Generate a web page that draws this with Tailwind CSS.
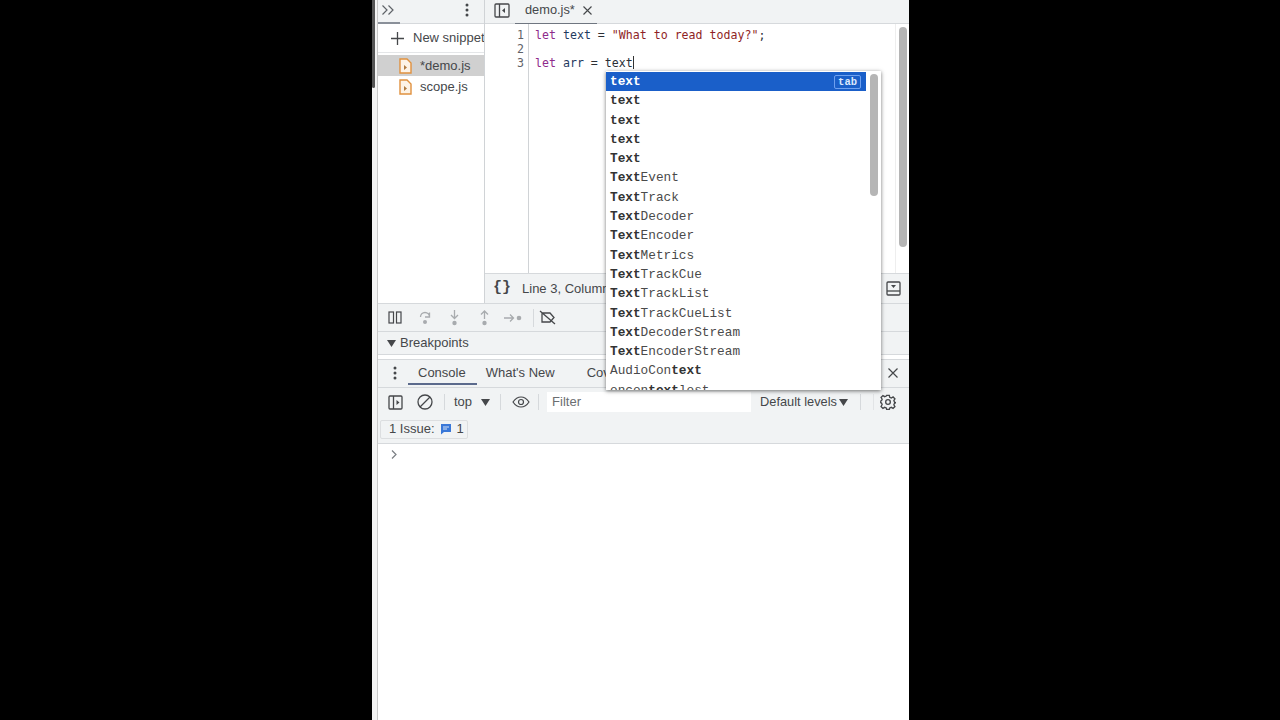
<!DOCTYPE html>
<html lang="en">
<head>
    <meta charset="UTF-8">
    <title>DevTools Sources</title>
    <script src="https://cdn.jsdelivr.net/npm/@tailwindcss/browser@4"></script>
</head>
<body class="bg-black overflow-hidden">
<div class="w-[1280px] h-[720px] flex justify-start font-['Liberation_Sans',sans-serif] text-[13px] text-[#45474a]">
    <div class="ml-[372px] w-[537px] h-full flex bg-white relative">
        <!-- page scrollbar strip -->
        <div class="w-[6px] h-full bg-[#f3f3f3] border-r border-[#c9c9c9]">
            <div class="w-[3px] h-[88px] bg-[#555] rounded-b-sm"></div>
        </div>

        <div class="flex-1 flex flex-col min-w-0">
            <!-- sources -->
            <div class="h-[304px] flex border-b border-[#d6d9dc]">
                <!-- navigator -->
                <div class="w-[107px] flex flex-col border-r border-[#d0d3d6] shrink-0">
                    <div class="h-[24px] bg-[#f1f3f4] border-b border-[#d6d9dc] flex items-center justify-between pl-[3px] pr-[15px] pb-[3px] relative">
                        <svg class="w-[14px] h-[12px]" viewBox="0 0 14 12" fill="none" stroke="#5f6368" stroke-width="1.2"><path d="M1.5 1.5 6 6 1.5 10.5M7.5 1.5 12 6 7.5 10.5"/></svg>
                        <svg class="w-[4px] h-[14px]" viewBox="0 0 4 14" fill="#45474a"><circle cx="2" cy="2" r="1.5"/><circle cx="2" cy="7" r="1.5"/><circle cx="2" cy="12" r="1.5"/></svg>
                        <div class="absolute left-0 bottom-[-1px] w-[22px] h-[2px] bg-[#8a9099]"></div>
                    </div>
                    <div class="h-[29px] flex items-center pl-[13px] gap-[9px] border-b border-[#e4e6e8] overflow-hidden whitespace-nowrap pr-[2px]">
                        <svg class="w-[13px] h-[13px] shrink-0" viewBox="0 0 13 13" fill="none" stroke="#45474a" stroke-width="1.3"><path d="M6.5 0v13M0 6.5h13"/></svg>
                        <span>New snippet</span>
                    </div>
                    <div class="h-[21px] mt-[2px] pt-[1px] bg-[#d0d0d0] flex items-center pl-[21px] gap-[8px]">
                        <svg class="w-[13px] h-[16px] shrink-0" viewBox="0 0 13 16" fill="#fdf3e6" stroke="#e0913f" stroke-width="1.4"><path d="M1 1h7l4 4v10H1z"/><path d="M5 7l3 2.5L5 12z" fill="#b07a3f" stroke="none"/></svg>
                        <span>*demo.js</span>
                    </div>
                    <div class="h-[22px] flex items-center pl-[21px] gap-[8px]">
                        <svg class="w-[13px] h-[16px] shrink-0" viewBox="0 0 13 16" fill="#fdf3e6" stroke="#e0913f" stroke-width="1.4"><path d="M1 1h7l4 4v10H1z"/><path d="M5 7l3 2.5L5 12z" fill="#b07a3f" stroke="none"/></svg>
                        <span>scope.js</span>
                    </div>
                </div>

                <!-- editor -->
                <div class="flex-1 flex flex-col min-w-0">
                    <div class="h-[24px] bg-[#f1f3f4] border-b border-[#d6d9dc] flex items-center pl-[9px]">
                        <svg class="w-[16px] h-[15px] shrink-0 mb-[3px]" viewBox="0 0 16 15" fill="none" stroke="#45474a" stroke-width="1.3"><rect x="1" y="1" width="14" height="13" rx="1"/><path d="M5.5 1v13"/><path d="M11 5v5L8 7.5z" fill="#45474a" stroke="none"/></svg>
                        <div class="relative h-[24px] ml-[5px] pl-[10px] pb-[3px] w-[82px] flex items-center gap-[8px]">
                            <span class="text-[12.8px]">demo.js*</span>
                            <svg class="w-[9px] h-[9px]" viewBox="0 0 9 9" stroke="#45474a" stroke-width="1.1"><path d="M.5.5l8 8M8.5.5l-8 8"/></svg>
                            <div class="absolute left-0 bottom-0 w-[82px] h-[1px] bg-[#6f7680]"></div>
                        </div>
                    </div>
                    <div class="flex-1 flex min-h-0">
                        <div class="w-[44px] border-r border-[#d0d3d6] pt-[4px] pr-[4px] text-right font-['DejaVu_Sans_Mono',monospace] text-[11.6px] leading-[14px] text-[#5f6368]">
                            <div>1</div><div>2</div><div>3</div>
                        </div>
                        <div class="flex-1 pt-[4px] pl-[6px] font-['DejaVu_Sans_Mono',monospace] text-[11.6px] leading-[14px] text-[#2b2f36]">
                            <div class="whitespace-pre"><span class="text-[#8f2a8c]">let</span> <span class="text-[#1f3a5f]">text</span> = <span class="text-[#8f1f26]">"What to read today?"</span>;</div>
                            <div class="whitespace-pre">&nbsp;</div>
                            <div class="whitespace-pre"><span class="text-[#8f2a8c]">let</span> <span class="text-[#1f3a5f]">arr</span> = text<span class="inline-block w-[1px] h-[13px] bg-[#333] align-[-2px]"></span></div>
                        </div>
                        <div class="w-[14px] border-l border-[#eeeeee] pl-[3px] pt-[3px]">
                            <div class="w-[8px] h-[220px] rounded-full bg-[#b5b5b5]"></div>
                        </div>
                    </div>
                    <div class="h-[30px] bg-[#f1f3f4] border-t border-[#d6d9dc] flex items-center pl-[8px] pr-[8px] justify-between">
                        <div class="flex items-center gap-[11px]">
                            <span class="font-['Liberation_Mono',monospace] text-[15px] font-bold">{}</span>
                            <span>Line 3, Column 15</span>
                        </div>
                        <svg class="w-[15px] h-[15px]" viewBox="0 0 15 15" fill="none" stroke="#45474a" stroke-width="1.3"><rect x="1" y="1" width="13" height="13" rx="1"/><path d="M1 10h13"/><path d="M5 4h5L7.5 7z" fill="#45474a" stroke="none"/></svg>
                    </div>
                </div>
            </div>

            <!-- debugger toolbar -->
            <div class="h-[28px] bg-[#f1f3f4] border-b border-[#d6d9dc] flex items-center pl-[10px] gap-[16.5px]">
                <svg class="w-[14px] h-[13px]" viewBox="0 0 14 13" fill="none" stroke="#45474a" stroke-width="1.2"><rect x="1" y="1" width="4.5" height="11"/><rect x="8.5" y="1" width="4.5" height="11"/></svg>
                <svg class="w-[13px] h-[14px]" viewBox="0 0 13 14" fill="none" stroke="#a8abae" stroke-width="1.3"><path d="M1.5 6a4.5 4.5 0 0 1 9 0M10.5 1.5V6H6"/><circle cx="6" cy="11" r="2" fill="#a8abae" stroke="none"/></svg>
                <svg class="w-[13px] h-[16px]" viewBox="0 0 13 16" fill="none" stroke="#a8abae" stroke-width="1.3"><path d="M6.5 0v8M3 5l3.5 3.5L10 5"/><circle cx="6.5" cy="13" r="2.2" fill="#a8abae" stroke="none"/></svg>
                <svg class="w-[13px] h-[16px]" viewBox="0 0 13 16" fill="none" stroke="#a8abae" stroke-width="1.3"><path d="M6.5 9V1M3 4.5 6.5 1 10 4.5"/><circle cx="6.5" cy="13" r="2.2" fill="#a8abae" stroke="none"/></svg>
                <svg class="w-[18px] h-[10px] -ml-[3px]" viewBox="0 0 18 10" fill="none" stroke="#a8abae" stroke-width="1.3"><path d="M0 5h9M6 1.5 9.5 5 6 8.5"/><circle cx="15" cy="5" r="2.3" fill="#a8abae" stroke="none"/></svg>
                <div class="w-[1px] h-[18px] bg-[#d6d9dc] -ml-[6px] -mr-[11px]"></div>
                <svg class="w-[17px] h-[15px]" viewBox="0 0 17 15" fill="none" stroke="#45474a" stroke-width="1.3"><path d="M3 3h8l4 4.5-4 4.5H3zM1 1l15 13"/></svg>
            </div>
            <!-- breakpoints -->
            <div class="h-[23px] bg-[#f1f3f4] border-b border-[#d6d9dc] flex items-center pl-[9px] gap-[4px]">
                <svg class="w-[9px] h-[7px]" viewBox="0 0 9 7" fill="#45474a"><path d="M0 0h9L4.5 7z"/></svg>
                <span>Breakpoints</span>
            </div>
            <div class="h-[5px] bg-white border-b border-[#d6d9dc]"></div>

            <!-- drawer tabs -->
            <div class="h-[28px] bg-[#f1f3f4] border-b border-[#d6d9dc] flex items-center relative pb-[1px]">
                <svg class="ml-[15px] w-[4px] h-[14px]" viewBox="0 0 4 14" fill="#45474a"><circle cx="2" cy="2" r="1.5"/><circle cx="2" cy="7" r="1.5"/><circle cx="2" cy="12" r="1.5"/></svg>
                <div class="relative ml-[21px]">Console<div class="absolute -left-[10px] -right-[11px] top-[20px] h-[2px] bg-[#5b6a8c]"></div></div>
                <div class="ml-[20px]">What's New</div>
                <div class="ml-[32px]">Coverage</div>
                <svg class="absolute right-[11px] top-[8px] w-[10px] h-[10px]" viewBox="0 0 10 10" stroke="#45474a" stroke-width="1.2"><path d="M.5.5l9 9M9.5.5l-9 9"/></svg>
            </div>

            <!-- console toolbar -->
            <div class="h-[28px] bg-[#f1f3f4] flex items-center pl-[10px]">
                <svg class="w-[15px] h-[15px] shrink-0" viewBox="0 0 15 15" fill="none" stroke="#45474a" stroke-width="1.3"><rect x="1" y="1" width="13" height="13" rx="1"/><path d="M5.5 1v13"/><path d="M8.5 5v5l3-2.5z" fill="#45474a" stroke="none"/></svg>
                <svg class="ml-[14px] w-[16px] h-[16px] shrink-0" viewBox="0 0 16 16" fill="none" stroke="#45474a" stroke-width="1.3"><circle cx="8" cy="8" r="7"/><path d="M3 13 13 3"/></svg>
                <div class="w-[1px] h-[16px] bg-[#d6d9dc] ml-[11px]"></div>
                <span class="ml-[9px]">top</span>
                <svg class="ml-[9px] w-[9px] h-[7px] shrink-0" viewBox="0 0 9 7" fill="#45474a"><path d="M0 0h9L4.5 7z"/></svg>
                <div class="w-[1px] h-[16px] bg-[#d6d9dc] ml-[10px]"></div>
                <svg class="ml-[11px] w-[18px] h-[12px] shrink-0" viewBox="0 0 18 12" fill="none" stroke="#45474a" stroke-width="1.2"><path d="M1 6c2-3 5-5 8-5s6 2 8 5c-2 3-5 5-8 5S3 9 1 6z"/><circle cx="9" cy="6" r="2.5"/></svg>
                <div class="w-[1px] h-[16px] bg-[#d6d9dc] ml-[8px]"></div>
                <div class="ml-[8px] w-[204px] h-[20px] bg-white flex items-center pl-[5px] text-[#6b6e72]">Filter</div>
                <span class="ml-[9px] text-[12.8px]">Default levels</span>
                <svg class="ml-[2px] w-[9px] h-[7px] shrink-0" viewBox="0 0 9 7" fill="#45474a"><path d="M0 0h9L4.5 7z"/></svg>
                <div class="w-[1px] h-[16px] bg-[#d6d9dc] ml-[12px]"></div>
                <div class="w-[1px] h-[16px] bg-[#e2e4e6] ml-[12px]"></div>
                <svg class="ml-[6px] w-[16px] h-[16px] shrink-0" viewBox="0 0 24 24" fill="none" stroke="#45474a" stroke-width="2"><path d="M10 2h4l.6 3 2.4 1 2.6-1.6 2.8 2.8L20.8 9.8l1 2.4 2.2.8v0l-2.2.8-1 2.4 1.6 2.6-2.8 2.8-2.6-1.6-2.4 1-.6 2.2h-4l-.6-2.2-2.4-1-2.6 1.6-2.8-2.8L3.2 15.8l-1-2.4L0 13v-2l2.2-.8 1-2.4-1.6-2.6 2.8-2.8L7 4l2.4-1z"/><circle cx="12" cy="12" r="3.5"/></svg>
            </div>

            <!-- issues -->
            <div class="h-[28px] bg-[#f1f3f4] border-b border-[#d6d9dc] flex items-center pl-[2px] pb-[1px]">
                <div class="h-[19px] w-[88px] border border-[#dcdee0] rounded-[2px] flex items-center pl-[8px] gap-[5px]">
                    <span>1 Issue:</span>
                    <svg class="w-[12px] h-[12px]" viewBox="0 0 12 12"><path d="M1 1h10v8H4l-3 2.5z" fill="#3a78d8"/><path d="M3 4h6M3 6h4" stroke="#fff" stroke-width=".8"/></svg>
                    <span>1</span>
                </div>
            </div>

            <!-- console prompt -->
            <div class="flex-1 bg-white pl-[13px] pt-[6px]">
                <svg class="w-[6px] h-[9px]" viewBox="0 0 6 9" fill="none" stroke="#7a7e83" stroke-width="1.2"><path d="M1 .5 5 4.5 1 8.5"/></svg>
            </div>
        </div>

        <!-- autocomplete popup -->
        <div class="absolute left-[234px] top-[71px] w-[275px] h-[319px] bg-white shadow-[0_1px_4px_rgba(0,0,0,0.55)] overflow-hidden font-['Liberation_Mono',monospace] text-[12.75px] leading-[19.3px] text-[#4a4a4a]">
            <div class="flex flex-col pt-[1px] [&_b]:text-[#333]">
                <div class="h-[19.3px] w-[260px] pl-[4px] pr-[5px] bg-[#1a5fc9] text-white flex items-center justify-between"><b class="text-white!">text</b><span class="text-[10.5px] font-bold leading-[12px] px-[3px] border border-[#6ea0ef] rounded-[2px] text-[#dbe7fb]">tab</span></div>
                <div class="pl-[4px]"><b>text</b></div>
                <div class="pl-[4px]"><b>text</b></div>
                <div class="pl-[4px]"><b>text</b></div>
                <div class="pl-[4px]"><b>Text</b></div>
                <div class="pl-[4px]"><b>Text</b>Event</div>
                <div class="pl-[4px]"><b>Text</b>Track</div>
                <div class="pl-[4px]"><b>Text</b>Decoder</div>
                <div class="pl-[4px]"><b>Text</b>Encoder</div>
                <div class="pl-[4px]"><b>Text</b>Metrics</div>
                <div class="pl-[4px]"><b>Text</b>TrackCue</div>
                <div class="pl-[4px]"><b>Text</b>TrackList</div>
                <div class="pl-[4px]"><b>Text</b>TrackCueList</div>
                <div class="pl-[4px]"><b>Text</b>DecoderStream</div>
                <div class="pl-[4px]"><b>Text</b>EncoderStream</div>
                <div class="pl-[4px]">AudioCon<b>text</b></div>
                <div class="pl-[4px]">oncon<b>text</b>lost</div>
            </div>
            <div class="absolute right-[3px] top-[3px] w-[8px] h-[122px] rounded-full bg-[#b5b5b5]"></div>
        </div>
    </div>
</div>
</body>
</html>
